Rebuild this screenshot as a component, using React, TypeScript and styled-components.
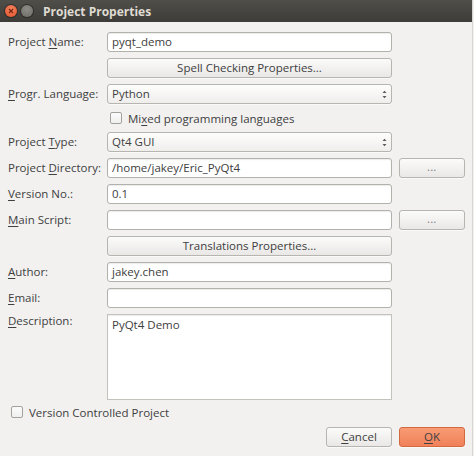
import React from "react";
import styled, { createGlobalStyle } from "styled-components";

const Global = createGlobalStyle`
  html, body { margin: 0; padding: 0; background: #f2f1f0; }
  body { font-family: "Open Sans", "Noto Sans", sans-serif; }
`;

const Window = styled.div`
  width: 472px;
  height: 456px;
  background: #f2f1f0;
  border-right: 1px solid #d9d7d3;
  display: flex;
  flex-direction: column;
  color: #404040;
  font-size: 11.5px;
`;

const TitleBar = styled.div`
  height: 22px;
  background: linear-gradient(#4f4e49, #3d3c38);
  display: flex;
  align-items: center;
  padding-left: 5px;
  gap: 4px;
  flex-shrink: 0;
`;

const WinButton = styled.div<{ $close?: boolean }>`
  width: 12px;
  height: 12px;
  border-radius: 50%;
  display: flex;
  align-items: center;
  justify-content: center;
  background: ${(p) =>
    p.$close
      ? "radial-gradient(circle at 50% 35%, #f5855f, #e0512c)"
      : "radial-gradient(circle at 50% 35%, #8d8c87, #6b6a65)"};
  box-shadow: 0 0 0 1px rgba(0, 0, 0, 0.35);
`;

const Title = styled.div`
  margin-left: 6px;
  color: #dfdbd2;
  font-weight: 700;
  font-size: 12px;
`;

const Body = styled.div`
  flex: 1;
  padding: 10px 7px 0 8px;
  display: flex;
  flex-direction: column;
`;

const Form = styled.div`
  display: grid;
  grid-template-columns: 92px 285px 66px;
  column-gap: 7px;
  row-gap: 6px;
  align-items: center;
`;

const Label = styled.div<{ $top?: boolean }>`
  grid-column: 1;
  align-self: ${(p) => (p.$top ? "start" : "center")};
  white-space: nowrap;
  line-height: 20px;
  ${(p) => (p.$top ? "margin-top: -3px;" : "")}
`;

const U = styled.span`
  text-decoration: underline;
  text-underline-offset: 2px;
  text-decoration-thickness: 1px;
`;

const Input = styled.div`
  grid-column: 2;
  height: 20px;
  box-sizing: border-box;
  background: #ffffff;
  border: 1px solid #b3b1ac;
  border-radius: 3px;
  box-shadow: inset 0 1px 1px rgba(0, 0, 0, 0.08);
  padding: 0 4px;
  line-height: 18px;
  white-space: nowrap;
  overflow: hidden;
`;

const TextArea = styled(Input)`
  height: 86px;
  align-self: start;
  padding: 1px 4px;
  border-radius: 0;
  border-color: #c4c2bd;
`;

const Button = styled.div<{ $col?: number; $primary?: boolean }>`
  grid-column: ${(p) => p.$col ?? 2};
  height: 20px;
  box-sizing: border-box;
  border: 1px solid ${(p) => (p.$primary ? "#d3693f" : "#b7b5b0")};
  border-radius: 3px;
  background: ${(p) =>
    p.$primary
      ? "linear-gradient(#f89b74, #f0805a)"
      : "linear-gradient(#fbfbfa, #e9e8e6)"};
  box-shadow: 0 1px 0 rgba(255, 255, 255, 0.6);
  display: flex;
  align-items: center;
  justify-content: center;
  line-height: 18px;
  white-space: nowrap;
`;

const Dots = styled.span`
  font-size: 10px;
  color: #6d6d6d;
  letter-spacing: 0.5px;
  margin-top: -2px;
`;

const Combo = styled(Button)`
  justify-content: space-between;
  padding: 0 4px 0 4px;
  background: linear-gradient(#fdfdfc, #efeeec);
`;

const Arrows = styled.svg`
  width: 5px;
  height: 11px;
`;

const CheckRow = styled.label<{ $col?: number }>`
  grid-column: ${(p) => p.$col ?? 2};
  display: flex;
  align-items: center;
  gap: 6px;
  padding-left: 3px;
  height: 16px;
  white-space: nowrap;
`;

const Box = styled.span`
  width: 12px;
  height: 12px;
  box-sizing: border-box;
  border: 1px solid #a3a19c;
  border-radius: 2px;
  background: linear-gradient(#fbfbfb, #efefee);
`;

const Footer = styled.div`
  display: flex;
  flex-direction: column;
  margin-top: 4px;
`;

const FooterCheck = styled(CheckRow)`
  height: 16px;
`;

const ButtonRow = styled.div`
  display: grid;
  grid-template-columns: 66px 66px;
  column-gap: 7px;
  justify-content: end;
  margin-top: 7px;
`;

const ComboArrows = () => (
  <Arrows viewBox="0 0 5 11">
    <path d="M0.5 4 L2.5 1.8 L4.5 4 Z" fill="#5a5a5a" />
    <path d="M0.5 7 L2.5 9.2 L4.5 7 Z" fill="#5a5a5a" />
  </Arrows>
);

const CloseX = () => (
  <svg width="6" height="6" viewBox="0 0 6 6">
    <path d="M1 1 L5 5 M5 1 L1 5" stroke="#7a2410" strokeWidth="1.3" />
  </svg>
);

export default function App() {
  return (
    <>
      <Global />
      <Window>
        <TitleBar>
          <WinButton $close>
            <CloseX />
          </WinButton>
          <WinButton />
          <Title>Project Properties</Title>
        </TitleBar>
        <Body>
          <Form>
            <Label>
              Project <U>N</U>ame:
            </Label>
            <Input>pyqt_demo</Input>
            <Button>Spell Checking Properties...</Button>
            <Label>
              <U>P</U>rogr. Language:
            </Label>
            <Combo>
              <span>Python</span>
              <ComboArrows />
            </Combo>
            <CheckRow>
              <Box />
              <span>
                Mi<U>x</U>ed programming languages
              </span>
            </CheckRow>
            <Label>
              Project <U>T</U>ype:
            </Label>
            <Combo>
              <span>Qt4 GUI</span>
              <ComboArrows />
            </Combo>
            <Label>
              Project <U>D</U>irectory:
            </Label>
            <Input>/home/jakey/Eric_PyQt4</Input>
            <Button $col={3}>
              <Dots>...</Dots>
            </Button>
            <Label>
              <U>V</U>ersion No.:
            </Label>
            <Input>0.1</Input>
            <Label>
              <U>M</U>ain Script:
            </Label>
            <Input />
            <Button $col={3}>
              <Dots>...</Dots>
            </Button>
            <Button>Translations Properties...</Button>
            <Label>
              <U>A</U>uthor:
            </Label>
            <Input>jakey.chen</Input>
            <Label>
              <U>E</U>mail:
            </Label>
            <Input />
            <Label $top>
              <U>D</U>escription:
            </Label>
            <TextArea>PyQt4 Demo</TextArea>
          </Form>
          <Footer>
            <FooterCheck>
              <Box />
              <span>Version Controlled Project</span>
            </FooterCheck>
            <ButtonRow>
              <Button $col={1}>
                <span>
                  <U>C</U>ancel
                </span>
              </Button>
              <Button $col={2} $primary>
                <span>
                  <U>O</U>K
                </span>
              </Button>
            </ButtonRow>
          </Footer>
        </Body>
      </Window>
    </>
  );
}
